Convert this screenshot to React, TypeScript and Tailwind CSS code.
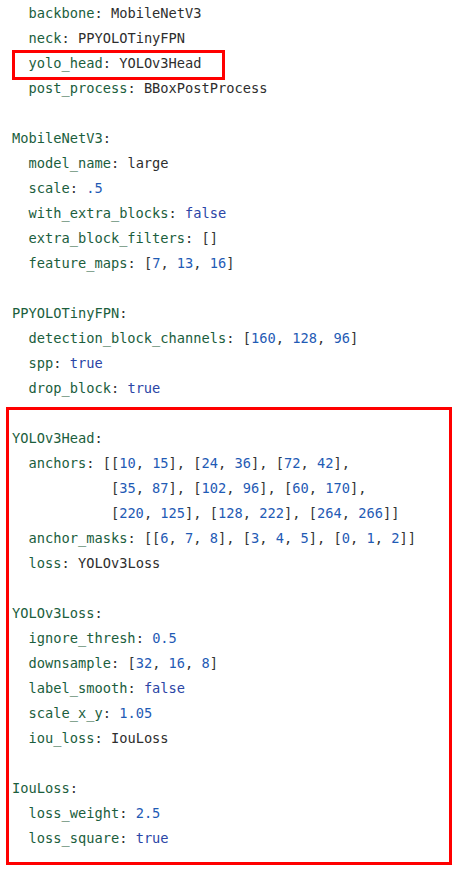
import React from "react";

type Tok = { t: string; c: "k" | "p" | "s" | "n" | "b" };

const K = "text-[#1b5e3d]";
const P = "text-[#333333]";
const S = "text-[#2e2e2e]";
const N = "text-[#1f5bb5]";
const B = "text-[#2b45a6]";

function cls(c: Tok["c"]) {
  switch (c) {
    case "k":
      return K;
    case "p":
      return P;
    case "s":
      return S;
    case "n":
      return N;
    case "b":
      return B;
  }
}

function arr(s: string): Tok[] {
  const out: Tok[] = [];
  const re = /(\d*\.?\d+)|([^\d.]+|\.)/g;
  let m: RegExpExecArray | null;
  while ((m = re.exec(s))) {
    if (m[1]) out.push({ t: m[1], c: "n" });
    else out.push({ t: m[2], c: "p" });
  }
  return out;
}

function kv(indent: number, key: string, val?: Tok[]): Tok[] {
  const toks: Tok[] = [{ t: " ".repeat(indent), c: "p" }, { t: key, c: "k" }, { t: ":", c: "p" }];
  if (val) {
    toks.push({ t: " ", c: "p" });
    toks.push(...val);
  }
  return toks;
}

const s = (t: string): Tok[] => [{ t, c: "s" }];
const n = (t: string): Tok[] => [{ t, c: "n" }];
const b = (t: string): Tok[] => [{ t, c: "b" }];

const lines: Tok[][] = [
  kv(2, "backbone", s("MobileNetV3")),
  kv(2, "neck", s("PPYOLOTinyFPN")),
  kv(2, "yolo_head", s("YOLOv3Head")),
  kv(2, "post_process", s("BBoxPostProcess")),
  [],
  kv(0, "MobileNetV3"),
  kv(2, "model_name", s("large")),
  kv(2, "scale", n(".5")),
  kv(2, "with_extra_blocks", b("false")),
  kv(2, "extra_block_filters", arr("[]")),
  kv(2, "feature_maps", arr("[7, 13, 16]")),
  [],
  kv(0, "PPYOLOTinyFPN"),
  kv(2, "detection_block_channels", arr("[160, 128, 96]")),
  kv(2, "spp", b("true")),
  kv(2, "drop_block", b("true")),
  [],
  kv(0, "YOLOv3Head"),
  kv(2, "anchors", arr("[[10, 15], [24, 36], [72, 42],")),
  arr("            [35, 87], [102, 96], [60, 170],"),
  arr("            [220, 125], [128, 222], [264, 266]]"),
  kv(2, "anchor_masks", arr("[[6, 7, 8], [3, 4, 5], [0, 1, 2]]")),
  kv(2, "loss", s("YOLOv3Loss")),
  [],
  kv(0, "YOLOv3Loss"),
  kv(2, "ignore_thresh", n("0.5")),
  kv(2, "downsample", arr("[32, 16, 8]")),
  kv(2, "label_smooth", b("false")),
  kv(2, "scale_x_y", n("1.05")),
  kv(2, "iou_loss", s("IouLoss")),
  [],
  kv(0, "IouLoss"),
  kv(2, "loss_weight", n("2.5")),
  kv(2, "loss_square", b("true")),
];

export default function App() {
  return (
    <div className="relative w-[460px] h-[870px] bg-white overflow-hidden">
      <pre
        className="m-0 pl-[12px] pt-[1px] text-[13.7px] leading-[25px] whitespace-pre"
        style={{ fontFamily: '"DejaVu Sans Mono", "Liberation Mono", monospace' }}
      >
        {lines.map((toks, i) => (
          <div key={i} className="h-[25px]">
            {toks.length === 0 ? "\u00a0" : toks.map((tk, j) => (
              <span key={j} className={cls(tk.c)}>
                {tk.t}
              </span>
            ))}
          </div>
        ))}
      </pre>
      <div className="absolute left-[12px] top-[50px] w-[213px] h-[30px] border-[3px] border-[#ff0000]" />
      <div className="absolute left-[6px] top-[407px] w-[446px] h-[458px] border-[3px] border-[#ff0000]" />
    </div>
  );
}
